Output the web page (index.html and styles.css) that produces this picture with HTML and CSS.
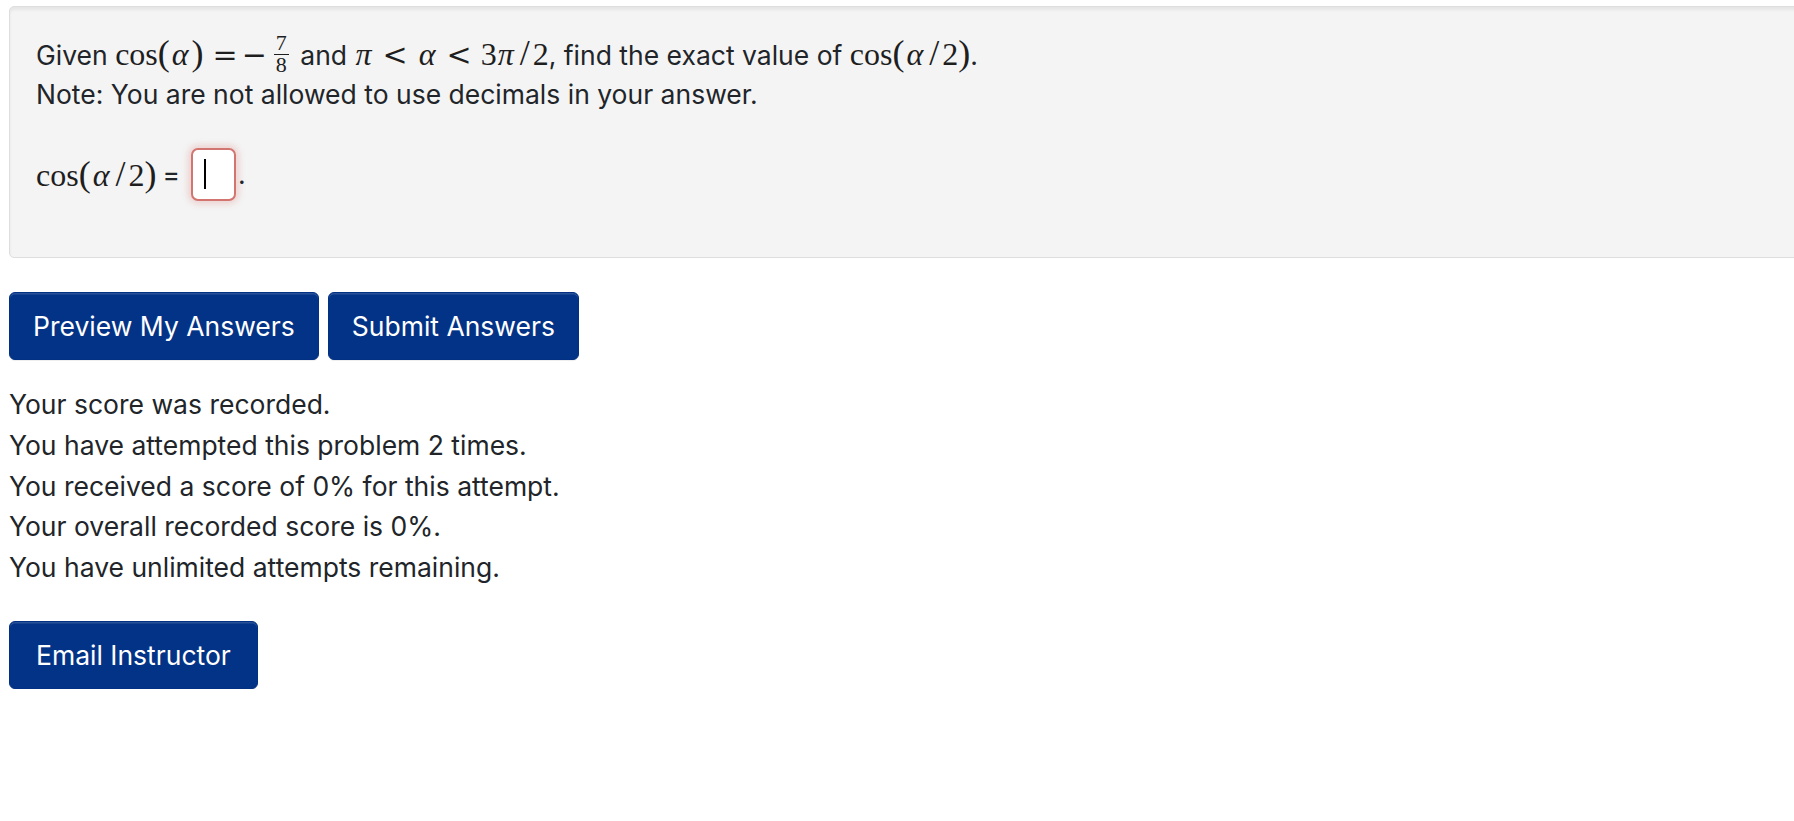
FILE: index.html
```html
<!DOCTYPE html>
<html lang="en">
<head>
<meta charset="utf-8">
<title>Problem</title>
<link rel="stylesheet" href="styles.css">
</head>
<body>
<div class="page">
  <div class="problem">
    <p class="line">Given <span class="m">cos<span class="p">(</span><i class="al">α</i><span class="p">)</span><span class="rel eqm">=</span><span class="rel minus">−</span><span class="frac"><span class="num">7</span><span class="den">8</span></span></span> and <span class="m"><i class="pi">π</i><span class="rel lt">&lt;</span><i class="al">α</i><span class="rel lt">&lt;</span>3<i class="pi">π</i><span class="sl">/</span>2</span>, find the exact value of <span class="m">cos<span class="p">(</span><i class="al">α</i><span class="sl">/</span>2<span class="p">)</span></span>.</p>
    <p class="line">Note: You are not allowed to use decimals in your answer.</p>
    <div class="answer">
      <span class="m">cos<span class="p">(</span><i class="al">α</i><span class="sl">/</span>2<span class="p">)</span></span><span class="eq">=</span><span class="ans-input"><span class="caret"></span></span><span class="dot">.</span>
    </div>
  </div>

  <div class="actions">
    <button class="btn" type="button">Preview My Answers</button>
    <button class="btn" type="button">Submit Answers</button>
  </div>

  <div class="score">
    <div>Your score was recorded.</div>
    <div>You have attempted this problem 2 times.</div>
    <div>You received a score of 0% for this attempt.</div>
    <div>Your overall recorded score is 0%.</div>
    <div>You have unlimited attempts remaining.</div>
  </div>

  <div class="email-row">
    <button class="btn btn-email" type="button">Email Instructor</button>
  </div>
</div>
</body>
</html>
```

FILE: styles.css
```css
html, body {
  margin: 0;
  padding: 0;
  background: #ffffff;
  overflow-x: hidden;
}

body {
  font-family: Inter, "Noto Sans", "Liberation Sans", sans-serif;
  font-size: 26.5px;
  line-height: 38.4px;
  color: #212529;
}

.page {
  padding: 6px 0 0 9px;
}

.problem {
  width: calc(100% + 40px);
  box-sizing: border-box;
  background: #f4f4f4;
  border: 1px solid #dedede;
  border-radius: 5px;
  box-shadow: inset 0 3px 3px rgba(0, 0, 0, 0.06);
  padding: 27px 26px 56px 26px;
}

.line {
  margin: 0;
}

.line + .line {
  margin-top: 1px;
}

/* inline math */
.m {
  font-family: "Liberation Serif", "Times New Roman", serif;
  font-size: 32px;
  color: #1e1e1e;
  white-space: nowrap;
}

.m i {
  font-style: italic;
}

.m .al {
  margin: 0 3px 0 2px;
}

.m .pi {
  margin: 0 3px 0 1px;
}

.p {
  font-size: 36px;
}

.sl {
  font-size: 36px;
  margin: 0 3px;
}

.rel {
  display: inline-block;
  font-family: "DejaVu Serif", "Liberation Serif", serif;
  font-size: 30px;
}

.eqm {
  margin: 0 4px 0 9px;
}

.minus {
  margin-right: 3px;
}

.lt {
  margin: 0 9px 0 8px;
}

.frac {
  display: inline-flex;
  flex-direction: column;
  align-items: center;
  vertical-align: 15px;
  margin: 0 4px 0 4px;
  font-size: 22px;
  line-height: 16px;
}

.frac .num {
  padding: 0 2px 3px;
  border-bottom: 1.3px solid #1e1e1e;
}

.frac .den {
  padding-top: 2px;
}

/* answer row */
.answer {
  display: flex;
  align-items: center;
  margin-top: 34px;
  height: 53px;
}

.eq {
  margin: 0 11px 0 6px;
}

.ans-input {
  display: inline-flex;
  align-items: center;
  box-sizing: border-box;
  width: 45px;
  height: 53px;
  background: #ffffff;
  border: 2px solid #d2746f;
  border-radius: 7px;
  box-shadow: 0 0 6px 3px rgba(214, 110, 105, 0.25);
  padding-left: 11px;
}

.caret {
  display: block;
  width: 2px;
  height: 30px;
  background: #000000;
}

.dot {
  margin-left: 2px;
}

/* buttons */
.actions {
  display: flex;
  gap: 9px;
  margin-top: 34px;
}

.btn {
  font-family: Inter, "Noto Sans", "Liberation Sans", sans-serif;
  font-size: 26.5px;
  line-height: 38.4px;
  color: #ffffff;
  background: #033387;
  border: 1px solid #023082;
  border-radius: 6px;
  padding: 14px 23px;
  box-shadow: inset 0 1.5px 0 rgba(255, 255, 255, 0.15), 0 1px 1px rgba(0, 0, 0, 0.075);
  cursor: pointer;
}

.btn-email {
  padding-left: 26px;
  padding-right: 26px;
}

.score {
  margin-top: 24px;
  line-height: 40.7px;
}

.email-row {
  margin-top: 33px;
}
```
